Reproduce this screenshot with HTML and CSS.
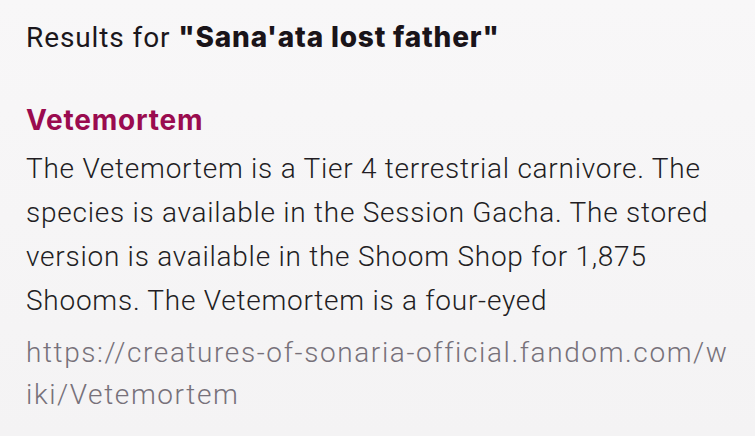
FILE: index.html
```html
<!DOCTYPE html>
<html lang="en">
<head>
<meta charset="utf-8">
<link rel="stylesheet" href="styles.css">
</head>
<body>
<main class="page">
  <h1 class="query">Results for <strong>"Sana'ata lost father"</strong></h1>
  <section class="result">
    <h2 class="result-title">Vetemortem</h2>
    <p class="snippet">The Vetemortem is a Tier 4 terrestrial carnivore. The species is available in the Session Gacha. The stored version is available in the Shoom Shop for 1,875 Shooms. The Vetemortem is a four-eyed</p>
    <p class="url">https://creatures-of-sonaria-official.fandom.com/wiki/Vetemortem</p>
  </section>
</main>
</body>
</html>
```
FILE: styles.css
```css
html, body {
  margin: 0;
  padding: 0;
}
body {
  width: 755px;
  height: 436px;
  overflow: hidden;
  background: linear-gradient(180deg, #f8f7f8 0%, #f4f3f4 100%);
  font-family: Roboto, "Noto Sans", sans-serif;
}
.page {
  padding: 19px 0 0 26px;
  width: 706px;
}
.query {
  margin: 0;
  font-weight: 400;
  font-size: 28px;
  line-height: 36px;
  color: #1b171c;
  letter-spacing: 0.9px;
}
.query strong {
  font-family: Inter, Roboto, sans-serif;
  font-weight: 800;
  font-size: 28px;
  letter-spacing: 0.8px;
  color: #1a1419;
}
.result {
  margin-top: 46px;
}
.result-title {
  margin: 0;
  font-family: Inter, Roboto, sans-serif;
  font-weight: 700;
  font-size: 28px;
  line-height: 36px;
  color: #9a0b4f;
  letter-spacing: 0.8px;
}
.snippet {
  margin: 9px 0 0;
  font-weight: 300;
  font-size: 28px;
  line-height: 44px;
  color: #221d23;
  letter-spacing: 0.75px;
}
.url {
  margin: 9px 0 0;
  font-weight: 300;
  font-size: 28px;
  line-height: 42px;
  color: #77717a;
  letter-spacing: 1.6px;
  word-break: break-all;
}
```
